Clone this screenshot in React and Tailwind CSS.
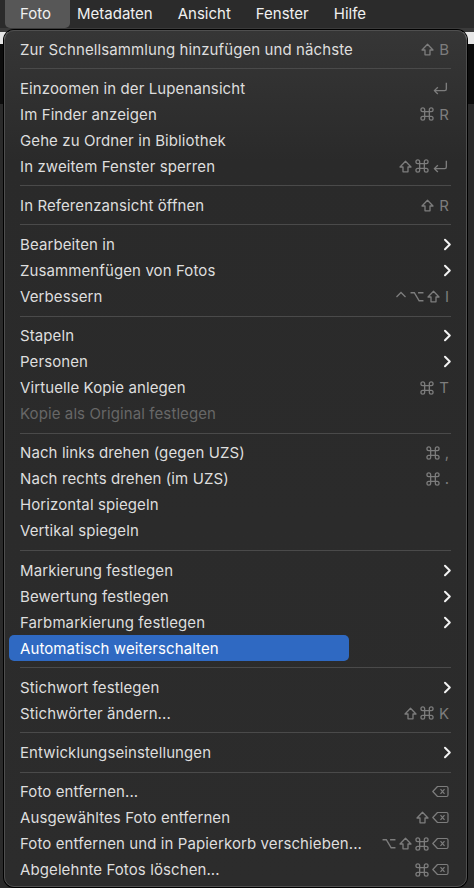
import React from "react";

const G = "#7d7d7d";

const Shift = () => (
  <svg width="13" height="13" viewBox="0 0 13 13" fill="none" stroke={G} strokeWidth="1.3" strokeLinejoin="round">
    <path d="M6.5 1.2 L12 7 H9 V11.8 H4 V7 H1 Z" />
  </svg>
);
const Cmd = () => (
  <svg width="14" height="14" viewBox="0 0 12 12" fill="none" stroke={G} strokeWidth="1.1">
    <path d="M4 4 H8 V8 H4 Z M4 4 V2.4 A1.6 1.6 0 1 0 2.4 4 H4 M8 4 V2.4 A1.6 1.6 0 1 1 9.6 4 H8 M8 8 V9.6 A1.6 1.6 0 1 0 9.6 8 H8 M4 8 V9.6 A1.6 1.6 0 1 1 2.4 8 H4" />
  </svg>
);
const Opt = () => (
  <svg width="14" height="13" viewBox="0 0 13 12" fill="none" stroke={G} strokeWidth="1.3">
    <path d="M0.5 2.5 H4 L8.5 10 H12.5 M7.5 2.5 H12.5" />
  </svg>
);
const Ctrl = () => (
  <svg width="12" height="13" viewBox="0 0 12 12" fill="none" stroke={G} strokeWidth="1.3">
    <path d="M1.5 6.5 L6 2 L10.5 6.5" />
  </svg>
);
const Del = () => (
  <svg width="17" height="13" viewBox="0 0 17 13" fill="none" stroke={G} strokeWidth="1.2" strokeLinejoin="round">
    <path d="M5.5 1.5 H14.5 A1.5 1.5 0 0 1 16 3 V10 A1.5 1.5 0 0 1 14.5 11.5 H5.5 L0.8 6.5 Z" />
    <path d="M8.5 4.2 L12.5 8.8 M12.5 4.2 L8.5 8.8" />
  </svg>
);
const Ret = () => (
  <svg width="17" height="15" viewBox="0 0 16 14" fill="none" stroke={G} strokeWidth="1.3" strokeLinejoin="round">
    <path d="M13.5 1.5 V7.5 A1.5 1.5 0 0 1 12 9 H2.5 M5.5 5.8 L2.2 9 L5.5 12.2" />
  </svg>
);
const Chev = () => (
  <svg width="9" height="13" viewBox="0 0 9 13" fill="none" stroke="#f2f2f2" strokeWidth="2" strokeLinecap="round" strokeLinejoin="round">
    <path d="M2 1.8 L6.8 6.5 L2 11.2" />
  </svg>
);
const K = ({ c }) => <span className="ml-[2px] text-[15px] leading-none text-[#7d7d7d]">{c}</span>;

const sections = [
  [["Zur Schnellsammlung hinzufügen und nächste", [<Shift />, <K c="B" />]]],
  [
    ["Einzoomen in der Lupenansicht", [<Ret />]],
    ["Im Finder anzeigen", [<Cmd />, <K c="R" />]],
    ["Gehe zu Ordner in Bibliothek", null],
    ["In zweitem Fenster sperren", [<Shift />, <Cmd />, <Ret />]],
  ],
  [["In Referenzansicht öffnen", [<Shift />, <K c="R" />]]],
  [
    ["Bearbeiten in", "sub"],
    ["Zusammenfügen von Fotos", "sub"],
    ["Verbessern", [<Ctrl />, <Opt />, <Shift />, <K c="I" />]],
  ],
  [
    ["Stapeln", "sub"],
    ["Personen", "sub"],
    ["Virtuelle Kopie anlegen", [<Cmd />, <K c="T" />]],
    ["Kopie als Original festlegen", null, true],
  ],
  [
    ["Nach links drehen (gegen UZS)", [<Cmd />, <K c="," />]],
    ["Nach rechts drehen (im UZS)", [<Cmd />, <K c="." />]],
    ["Horizontal spiegeln", null],
    ["Vertikal spiegeln", null],
  ],
  [
    ["Markierung festlegen", "sub"],
    ["Bewertung festlegen", "sub"],
    ["Farbmarkierung festlegen", "sub"],
    ["Automatisch weiterschalten", null, false, true],
  ],
  [
    ["Stichwort festlegen", "sub"],
    ["Stichwörter ändern...", [<Shift />, <Cmd />, <K c="K" />]],
  ],
  [["Entwicklungseinstellungen", "sub"]],
  [
    ["Foto entfernen...", [<Del />]],
    ["Ausgewähltes Foto entfernen", [<Shift />, <Del />]],
    ["Foto entfernen und in Papierkorb verschieben...", [<Opt />, <Shift />, <Cmd />, <Del />]],
    ["Abgelehnte Fotos löschen...", [<Cmd />, <Del />]],
  ],
];

function Row({ label, right, disabled, active }) {
  return (
    <div className="relative h-[26px] flex items-center">
      {active && <div className="absolute left-[4px] top-0 h-[26px] w-[340px] rounded-[5px] bg-[#2f69c2]" />}
      <span
        className={
          "relative pl-[15px] text-[15px] leading-none whitespace-nowrap tracking-[0.1px] " +
          (disabled ? "text-[#676767]" : active ? "text-white" : "text-[#dedede]")
        }
      >
        {label}
      </span>
      <div
        className={
          "relative ml-auto flex items-center gap-[3px] " + (right === "sub" ? "pr-[14px]" : "pr-[17px]")
        }
      >
        {right === "sub" ? <Chev /> : Array.isArray(right) ? right.map((r, i) => <React.Fragment key={i}>{r}</React.Fragment>) : null}
      </div>
    </div>
  );
}

export default function App() {
  return (
    <div className="relative w-[474px] h-[888px] overflow-hidden bg-[#151515] font-['Inter',sans-serif]">
      <div className="h-[28px] bg-[#2b2b2b] flex items-stretch text-[15px] text-[#f0f0f0]">
        <div className="ml-[5px] w-[65px] pl-[15px] flex items-center rounded-b-[5px] bg-[#575757]">Foto</div>
        <div className="ml-[7px] flex items-center gap-[25px]">
          <span>Metadaten</span>
          <span>Ansicht</span>
          <span>Fenster</span>
          <span>Hilfe</span>
        </div>
      </div>
      <div className="h-[4px] bg-[#3a3a3a]" />
      <div className="h-[12px] bg-[#e6e6e6]" />
      <div className="h-[60px] bg-[#0c0c0c]" />
      <div className="h-[784px] bg-[#2a2a2a]" />

      <div className="absolute left-[4px] top-[30px] w-[463px] h-[857px] rounded-[10px] border border-[#4f4f4f] ring-1 ring-black bg-[linear-gradient(to_bottom,#363636_0px,#2a2a2a_130px,#2c2c2c_100%)] pt-[5px]">
        {sections.map((sec, si) => (
          <React.Fragment key={si}>
            {si > 0 && (
              <div className="h-[13.2px] flex items-center px-[15px]">
                <div className="h-px w-full bg-[#4a4a4a]" />
              </div>
            )}
            {sec.map(([label, right, disabled, active], ri) => (
              <Row key={ri} label={label} right={right} disabled={disabled} active={active} />
            ))}
          </React.Fragment>
        ))}
      </div>
    </div>
  );
}
